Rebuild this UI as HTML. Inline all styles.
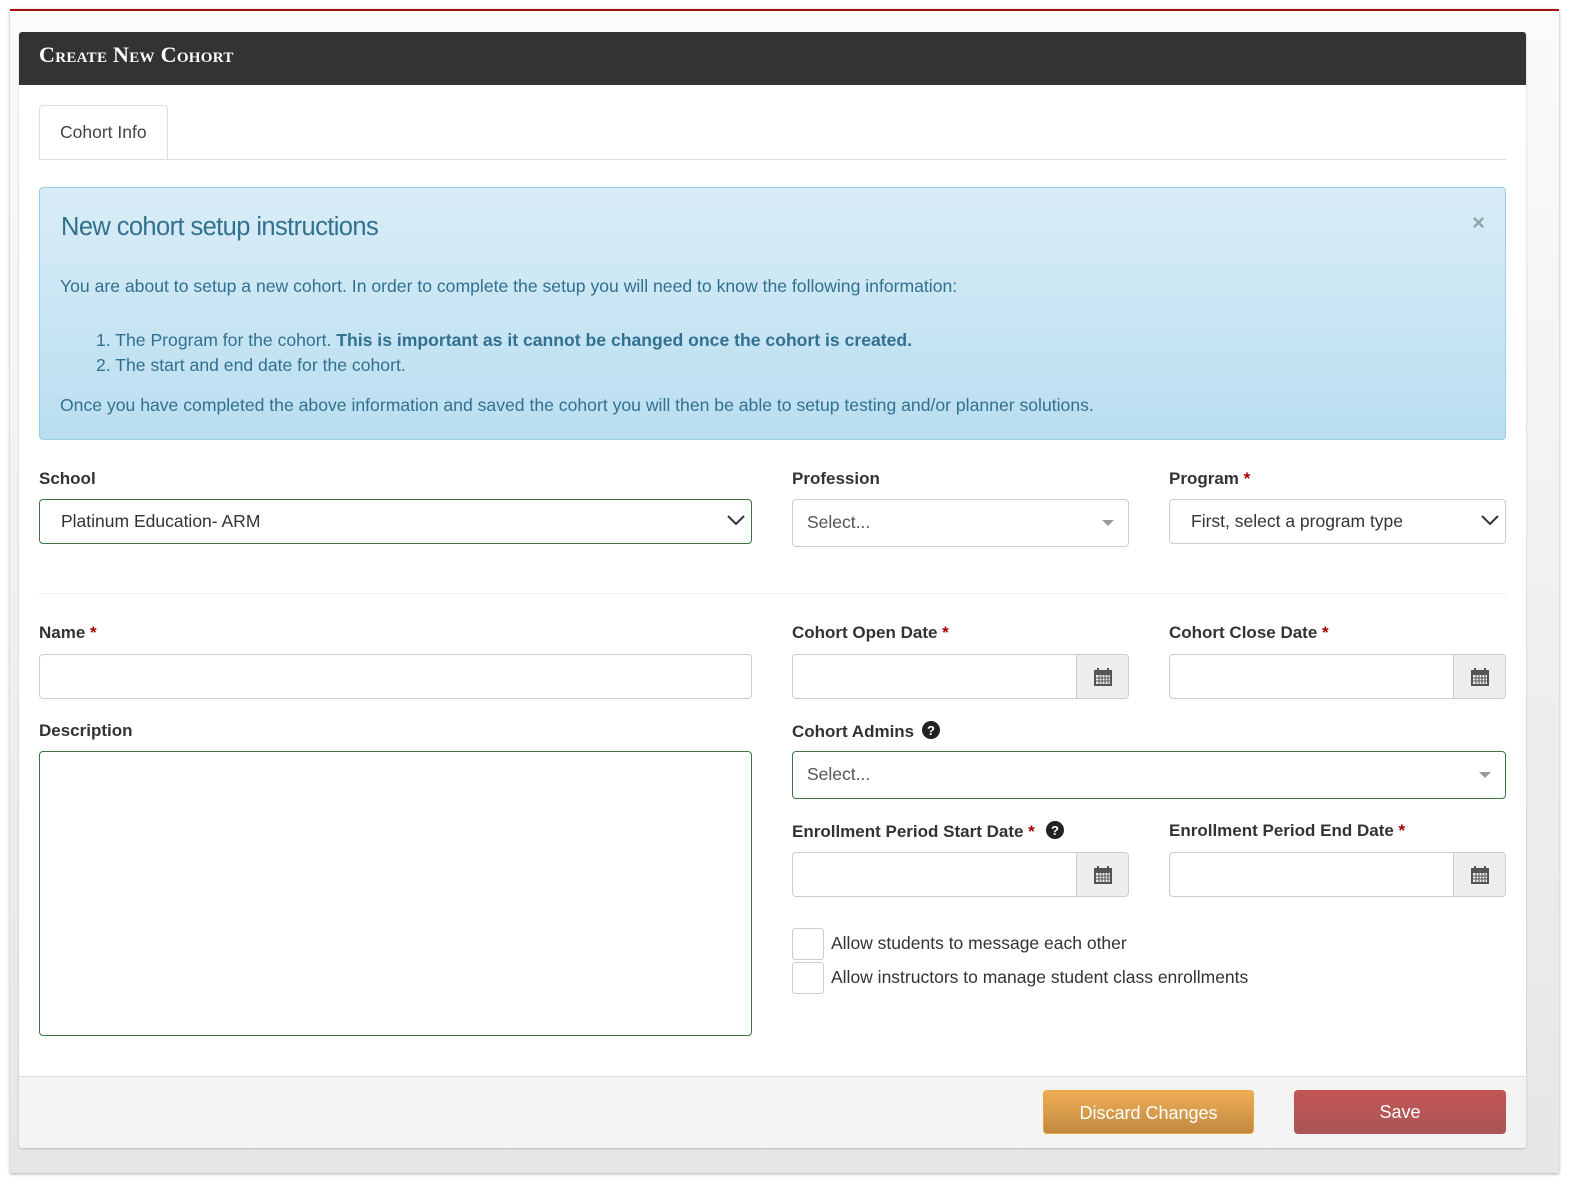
<!DOCTYPE html>
<html><head><style>
*{box-sizing:border-box}
html,body{margin:0;width:1580px;height:1190px;overflow:hidden}
body{background:#fff;font-family:"Liberation Sans",sans-serif;color:#333;position:relative}
.frame{position:absolute;left:10px;top:9px;width:1549px;height:1164px;border-top:2px solid #a50e0e;background:linear-gradient(#fbfbfb,#e6e6e6);box-shadow:0 1px 3px rgba(0,0,0,.35)}
.panel{position:absolute;left:19px;top:32px;width:1507px;height:1116px;background:#fff;border-radius:3px;box-shadow:0 1px 2px rgba(0,0,0,.2)}
.hdr{height:53px;background:#333;border-radius:3px 3px 0 0;color:#fff;font-family:"Liberation Serif",serif;font-weight:bold;font-variant:small-caps;font-size:22px;padding:10px 20px;letter-spacing:.3px}
.abs{position:absolute}
.tab{left:20px;top:73px;width:129px;height:55px;border:1px solid #ddd;border-bottom:none;border-radius:4px 4px 0 0;background:#fff;font-size:17.5px;color:#444;padding:16px 0 0 20px}
.tabline{left:20px;top:127px;width:1467px;height:1px;background:#ddd}
.alert{left:20px;top:155px;width:1467px;height:253px;border:1px solid #9acfea;border-radius:4px;background:linear-gradient(#d9edf7,#b9def0);color:#31708f;font-size:17.6px}
.alert h2{position:absolute;left:21px;top:25px;margin:0;font-weight:normal;font-size:25.5px;letter-spacing:-.6px}
.lbl{font-weight:bold;font-size:17px;color:#333}
.req{color:#a00}
.inp{border:1px solid #ccc;border-radius:4px;background:#fff;font-size:17.5px;color:#555}
.grn{border-color:#3c763d}
.cal{position:absolute;right:0;top:0;bottom:0;width:52px;background:#eee;border-left:1px solid #ccc;border-radius:0 4px 4px 0}
.chk{width:32px;height:32px;border:1px solid #ccc;border-radius:3px;background:#fff}
.btn{height:44px;border-radius:4px;color:#fff;font-size:18px;text-align:center;line-height:44px}
</style></head><body>
<div class="frame"></div>
<div class="panel">
<div class="hdr">Create New Cohort</div>
<div class="abs tab">Cohort Info</div>
<div class="abs tabline"></div>
<div class="abs alert">
<h2>New cohort setup instructions</h2>
<div class="abs" style="right:20px;top:22px;font-size:22px;color:#8aa;font-weight:bold">×</div>
<div class="abs" style="left:20px;top:88px">You are about to setup a new cohort. In order to complete the setup you will need to know the following information:</div>
<div class="abs" style="left:56px;top:142px">1. The Program for the cohort. <b>This is important as it cannot be changed once the cohort is created.</b></div>
<div class="abs" style="left:56px;top:167px">2. The start and end date for the cohort.</div>
<div class="abs" style="left:20px;top:207px">Once you have completed the above information and saved the cohort you will then be able to setup testing and/or planner solutions.</div>
</div>

<div class="abs lbl" style="left:20px;top:437px">School</div>
<div class="abs inp grn" style="left:20px;top:467px;width:713px;height:45px;padding:11px 21px;color:#333">Platinum Education- ARM
<svg class="abs" style="right:6px;top:14px" width="18" height="12"><path d="M1 2l8 8 8-8" fill="none" stroke="#333" stroke-width="2"/></svg></div>
<div class="abs lbl" style="left:773px;top:437px">Profession</div>
<div class="abs inp" style="left:773px;top:467px;width:337px;height:48px;padding:12px 14px">Select...
<svg class="abs" style="right:14px;top:20px" width="12" height="7"><path d="M0 0h12l-6 6z" fill="#999"/></svg></div>
<div class="abs lbl" style="left:1150px;top:437px">Program <span class="req">*</span></div>
<div class="abs inp" style="left:1150px;top:467px;width:337px;height:45px;padding:11px 21px;color:#333">First, select a program type
<svg class="abs" style="right:6px;top:14px" width="18" height="12"><path d="M1 2l8 8 8-8" fill="none" stroke="#333" stroke-width="2"/></svg></div>
<div class="abs" style="left:20px;top:561px;width:1467px;height:1px;background:#eee"></div>

<div class="abs lbl" style="left:20px;top:591px">Name <span class="req">*</span></div>
<div class="abs inp" style="left:20px;top:622px;width:713px;height:45px"></div>
<div class="abs lbl" style="left:773px;top:591px">Cohort Open Date <span class="req">*</span></div>
<div class="abs inp" style="left:773px;top:622px;width:337px;height:45px"><div class="cal"><svg class="abs" style="left:17px;top:13px" width="18" height="18"><rect x="0" y="2" width="18" height="16" fill="#555"/><rect x="2" y="7" width="14" height="9" fill="#eee"/><path d="M2 10h14M2 13h14M5 7v9M8 7v9M11 7v9M14 7v9" stroke="#555"/><rect x="3" y="0" width="2" height="4" fill="#555"/><rect x="13" y="0" width="2" height="4" fill="#555"/></svg></div></div>
<div class="abs lbl" style="left:1150px;top:591px">Cohort Close Date <span class="req">*</span></div>
<div class="abs inp" style="left:1150px;top:622px;width:337px;height:45px"><div class="cal"><svg class="abs" style="left:17px;top:13px" width="18" height="18"><rect x="0" y="2" width="18" height="16" fill="#555"/><rect x="2" y="7" width="14" height="9" fill="#eee"/><path d="M2 10h14M2 13h14M5 7v9M8 7v9M11 7v9M14 7v9" stroke="#555"/><rect x="3" y="0" width="2" height="4" fill="#555"/><rect x="13" y="0" width="2" height="4" fill="#555"/></svg></div></div>

<div class="abs lbl" style="left:20px;top:689px">Description</div>
<div class="abs inp grn" style="left:20px;top:719px;width:713px;height:285px"></div>
<div class="abs lbl" style="left:773px;top:689px">Cohort Admins <svg style="vertical-align:-2px;margin-left:3px" width="18" height="18"><circle cx="9" cy="9" r="9" fill="#222"/><text x="9" y="14" text-anchor="middle" fill="#fff" font-size="13" font-weight="bold" font-family="Liberation Sans">?</text></svg></div>
<div class="abs inp grn" style="left:773px;top:719px;width:714px;height:48px;padding:12px 14px">Select...
<svg class="abs" style="right:14px;top:20px" width="12" height="7"><path d="M0 0h12l-6 6z" fill="#999"/></svg></div>

<div class="abs lbl" style="left:773px;top:789px">Enrollment Period Start Date <span class="req">*</span> <svg style="vertical-align:-2px;margin-left:6px" width="18" height="18"><circle cx="9" cy="9" r="9" fill="#222"/><text x="9" y="14" text-anchor="middle" fill="#fff" font-size="13" font-weight="bold" font-family="Liberation Sans">?</text></svg></div>
<div class="abs inp" style="left:773px;top:820px;width:337px;height:45px"><div class="cal"><svg class="abs" style="left:17px;top:13px" width="18" height="18"><rect x="0" y="2" width="18" height="16" fill="#555"/><rect x="2" y="7" width="14" height="9" fill="#eee"/><path d="M2 10h14M2 13h14M5 7v9M8 7v9M11 7v9M14 7v9" stroke="#555"/><rect x="3" y="0" width="2" height="4" fill="#555"/><rect x="13" y="0" width="2" height="4" fill="#555"/></svg></div></div>
<div class="abs lbl" style="left:1150px;top:789px">Enrollment Period End Date <span class="req">*</span></div>
<div class="abs inp" style="left:1150px;top:820px;width:337px;height:45px"><div class="cal"><svg class="abs" style="left:17px;top:13px" width="18" height="18"><rect x="0" y="2" width="18" height="16" fill="#555"/><rect x="2" y="7" width="14" height="9" fill="#eee"/><path d="M2 10h14M2 13h14M5 7v9M8 7v9M11 7v9M14 7v9" stroke="#555"/><rect x="3" y="0" width="2" height="4" fill="#555"/><rect x="13" y="0" width="2" height="4" fill="#555"/></svg></div></div>

<div class="abs chk" style="left:773px;top:896px"></div>
<div class="abs" style="left:812px;top:901px;font-size:17.5px">Allow students to message each other</div>
<div class="abs chk" style="left:773px;top:930px"></div>
<div class="abs" style="left:812px;top:935px;font-size:17.5px">Allow instructors to manage student class enrollments</div>

<div class="abs" style="left:0;top:1044px;width:1507px;height:72px;background:#f4f4f4;border-top:1px solid #ddd;border-radius:0 0 3px 3px"></div>
<div class="abs btn" style="left:1024px;top:1058px;width:211px;background:linear-gradient(#efae56,#c08940);border:1px solid #e9a33f">Discard Changes</div>
<div class="abs btn" style="left:1275px;top:1058px;width:212px;background:linear-gradient(#c55555,#a85656)">Save</div>
</div>
</body></html>
